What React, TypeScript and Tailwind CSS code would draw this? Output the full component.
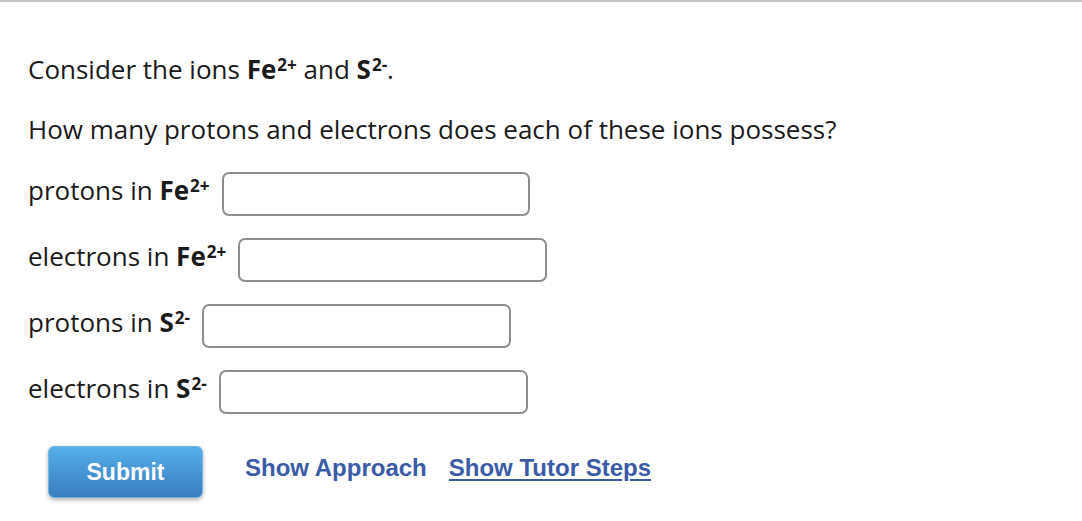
import type { ReactNode } from 'react';

function Ion({ base, charge }: { base: string; charge: string }) {
  return (
    <b className="font-bold">
      {base}
      <span className="inline-block text-[17px] leading-none -translate-y-[8px] ml-[1px]">{charge}</span>
    </b>
  );
}

function Field({ label, width }: { label: ReactNode; width: string }) {
  return (
    <div className="flex items-center h-[44px]">
      <span className="mr-[12px] -translate-y-[4px]">{label}</span>
      <div className={`h-[44px] ${width} rounded-[7px] border-2 border-[#8e8e8e] bg-white`} />
    </div>
  );
}

export default function App() {
  return (
    <div className="w-[1082px] h-[521px] bg-white border-t-2 border-[#c8c8c8] text-[26px] text-[#1a1a1a] font-['Open_Sans',sans-serif]">
      <div className="pl-[28px] pt-[51px] flex flex-col">
        <p className="leading-[32px]">
          Consider the ions <Ion base="Fe" charge="2+" /> and <Ion base="S" charge="2-" />.
        </p>
        <p className="mt-[28px] leading-[32px]">How many protons and electrons does each of these ions possess?</p>
        <div className="mt-[27px] flex flex-col gap-[22px]">
          <Field label={<>protons in <Ion base="Fe" charge="2+" /></>} width="w-[308px]" />
          <Field label={<>electrons in <Ion base="Fe" charge="2+" /></>} width="w-[309px]" />
          <Field label={<>protons in <Ion base="S" charge="2-" /></>} width="w-[309px]" />
          <Field label={<>electrons in <Ion base="S" charge="2-" /></>} width="w-[309px]" />
        </div>
        <div className="mt-[32px] ml-[20px] flex items-center font-['Liberation_Sans',Arial,sans-serif] font-bold text-[24px]">
          <button className="w-[155px] h-[52px] rounded-[6px] border border-[#6fb6e6] bg-gradient-to-b from-[#55afe9] to-[#3a7dbf] text-white text-[23px] shadow-[0_2px_4px_rgba(0,0,0,0.3)]">
            Submit
          </button>
          <span className="ml-[42px] -translate-y-[4px] text-[#3a5ca6]">Show Approach</span>
          <span className="ml-[22px] -translate-y-[4px] text-[#3a5ca6] underline underline-offset-[3px]">Show Tutor Steps</span>
        </div>
      </div>
    </div>
  );
}
